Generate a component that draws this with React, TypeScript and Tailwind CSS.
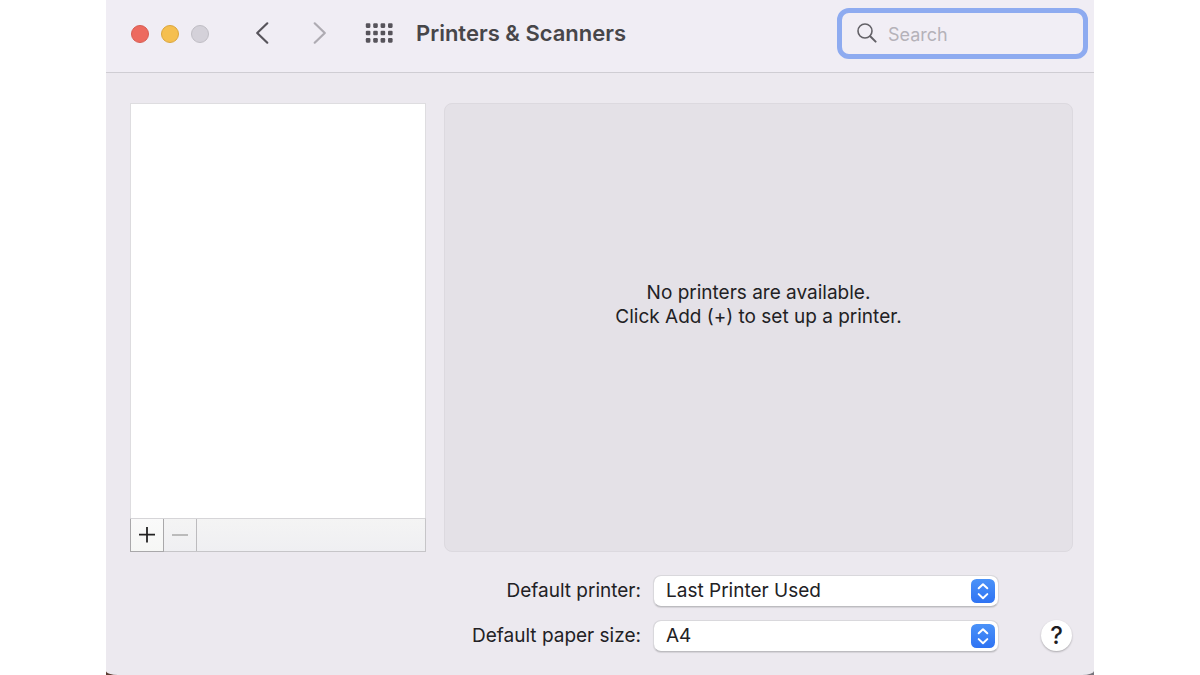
import React from "react";

function SelectArrows() {
  return (
    <svg aria-hidden="true" viewBox="0 0 24 24" className="pointer-events-none absolute top-1 right-1 size-6">
      <defs>
        <linearGradient id="arrowFill" x1="0" y1="0" x2="0" y2="1">
          <stop offset="0" stopColor="#4a92f8" />
          <stop offset="1" stopColor="#2f73f3" />
        </linearGradient>
      </defs>
      <rect width="24" height="24" rx="5.5" fill="url(#arrowFill)" />
      <path
        d="M7.7 9.3 12 5.2l4.3 4.1M7.7 15.1l4.3 4.1 4.3-4.1"
        fill="none"
        stroke="#fff"
        strokeWidth="2"
        strokeLinecap="round"
        strokeLinejoin="round"
      />
    </svg>
  );
}

function SelectRow({ id, label, options }: { id: string; label: string; options: string[] }) {
  return (
    <div className="flex items-center gap-3">
      <label htmlFor={id} className="flex-1 text-right whitespace-nowrap">
        {label}
      </label>
      <div className="relative w-[346px]">
        <select
          id={id}
          className="block h-8 w-full appearance-none rounded-lg border border-[#d9d8dc] border-b-[#bdbcc0] bg-white bg-clip-padding px-3 leading-6 shadow-[0_1px_1px_rgba(0,0,0,0.1)] outline-none"
        >
          {options.map((o) => (
            <option key={o}>{o}</option>
          ))}
        </select>
        <SelectArrows />
      </div>
    </div>
  );
}

function Toolbar() {
  const columns = [0, 1, 2, 3];
  const rows = [0, 1, 2];
  return (
    <header className="flex h-[73px] items-center border-b border-[#cfcdd3] bg-[#f0edf4] pr-1.5 pb-1 pl-[25px]">
      <div className="flex gap-3">
        <button aria-label="Close" className="size-[18px] rounded-full border border-[#d75d52] bg-[#ed6a5f]" />
        <button aria-label="Minimize" className="size-[18px] rounded-full border border-[#dba63d] bg-[#f5bf4f]" />
        <button aria-label="Zoom" disabled className="size-[18px] rounded-full border border-[#c0bec5] bg-[#d4d1d9]" />
      </div>
      <div className="ml-[46px] flex gap-[42px] pb-0.5">
        <button aria-label="Back">
          <svg viewBox="0 0 15 24" className="h-6 w-[15px]" fill="none" stroke="#57545b" strokeWidth="2.2" strokeLinecap="round" strokeLinejoin="round">
            <path d="M12.3 2.3 2.2 12l10.1 9.7" />
          </svg>
        </button>
        <button aria-label="Forward" disabled>
          <svg viewBox="0 0 15 24" className="h-6 w-[15px]" fill="none" stroke="#aeabb2" strokeWidth="2.2" strokeLinecap="round" strokeLinejoin="round">
            <path d="m2.7 2.3 10.1 9.7-10.1 9.7" />
          </svg>
        </button>
      </div>
      <button aria-label="Show all" className="ml-[38px] pb-0.5">
        <svg viewBox="0 0 28 20" className="h-5 w-7" fill="#57545b">
          {rows.map((r) =>
            columns.map((c) => (
              <rect key={`${r}-${c}`} x={0.8 + c * 7.4} y={0.3 + r * 7.4} width="4.6" height="4.6" rx="1.1" />
            )),
          )}
        </svg>
      </button>
      <h1 className="ml-[23px] flex-1 pb-0.5 text-[22px] leading-7 font-semibold whitespace-nowrap text-[#474649]">
        Printers &amp; Scanners
      </h1>
      <label className="mb-0.5 flex h-[51px] w-[251px] items-center rounded-xl border-5 border-[#8eabf0] bg-[#f1eef5] pl-[15px]">
        <svg aria-hidden="true" viewBox="0 0 20 20" className="size-5 shrink-0" fill="none" stroke="#636167" strokeLinecap="round">
          <circle cx="8" cy="8" r="7" strokeWidth="1.6" />
          <path d="m13.2 13.2 5.4 5.4" strokeWidth="2" />
        </svg>
        <input
          type="search"
          aria-label="Search"
          placeholder="Search"
          className="mt-1 ml-[11px] w-full min-w-0 bg-transparent text-[18px] leading-6 outline-none placeholder:text-[#b5b2b9]"
        />
      </label>
    </header>
  );
}

function PrinterList() {
  return (
    <section aria-label="Printers" className="flex w-[296px] shrink-0 flex-col">
      <div className="flex-1 border border-b-0 border-[#dedde0] bg-white" />
      <div className="flex h-[34px] border border-[#c6c5c8] border-t-[#d6d5d8] bg-linear-to-b from-[#f4f4f4] to-[#efeff2]">
        <button aria-label="Add printer" className="-mb-px -ml-px flex w-[34px] items-center justify-center border border-t-0 border-[#a9a8aa] bg-linear-to-b from-[#fafafa] to-[#f6f7f5]">
          <svg viewBox="0 0 16 16" className="size-4" stroke="#222" strokeWidth="1.8">
            <path d="M0 7.7h16M8 0v15.6" />
          </svg>
        </button>
        <button aria-label="Remove printer" disabled className="flex w-[33px] items-center justify-center border-r border-[#bcbbbe]">
          <svg viewBox="0 0 16 16" className="size-4" stroke="#bbb" strokeWidth="1.8">
            <path d="M0 8h16" />
          </svg>
        </button>
      </div>
    </section>
  );
}

export default function App() {
  return (
    <div className="min-h-screen bg-white font-[Inter,'Liberation_Sans',sans-serif] text-[19px] leading-6 text-[#222124]">
      <div className="mx-auto max-w-[988px] bg-linear-to-r from-[#5a3b30] to-[#77757c]">
        <div className="flex min-h-screen flex-col overflow-hidden rounded-[0_0_12px_12px/0_0_4px_4px] bg-[#ece9ef]">
          <Toolbar />
          <main className="flex flex-1 flex-col pt-[30px] pr-[21px] pb-[23px] pl-6">
            <div className="flex flex-1 gap-[18px]">
              <PrinterList />
              <section className="flex flex-1 flex-col items-center justify-center rounded-lg border border-[#dcd9df] bg-[#e4e1e7] pb-[46px] text-center">
                <p>No printers are available.</p>
                <p>Click Add (+) to set up a printer.</p>
              </section>
            </div>
            <div className="mt-[23px] flex items-end justify-end gap-[42px] pr-px">
              <div className="flex flex-col gap-[13px]">
                <SelectRow id="printer" label="Default printer:" options={["Last Printer Used"]} />
                <SelectRow id="paper" label="Default paper size:" options={["A4"]} />
              </div>
              <button
                aria-label="Help"
                className="mb-px flex size-[31px] items-center justify-center rounded-full bg-white text-[24px] leading-6 font-medium text-[#1d1d1f] shadow-[0_1px_2px_rgba(0,0,0,0.28)]"
              >
                ?
              </button>
            </div>
          </main>
        </div>
      </div>
    </div>
  );
}
